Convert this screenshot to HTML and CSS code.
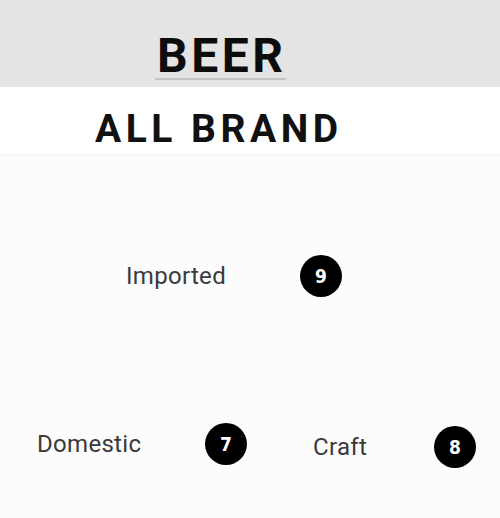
FILE: index.html
```html
<!DOCTYPE html>
<html>
<head>
<meta charset="utf-8">
<link rel="stylesheet" href="styles.css">
</head>
<body>
<header class="top">
  <span class="top-title">BEER</span>
</header>
<h1 class="brand">ALL BRAND</h1>
<main class="list">
  <div class="row row-imported">
    <div class="item item-imported">
      <span class="label">Imported</span>
      <span class="badge">9</span>
    </div>
  </div>
  <div class="row row-bottom">
    <div class="item item-domestic">
      <span class="label">Domestic</span>
      <span class="badge">7</span>
    </div>
    <div class="item item-craft">
      <span class="label">Craft</span>
      <span class="badge">8</span>
    </div>
  </div>
</main>
</body>
</html>
```
FILE: styles.css
```css
html, body {
  margin: 0;
  padding: 0;
}
body {
  width: 500px;
  height: 518px;
  overflow: hidden;
  background: #fcfcfc;
  font-family: Roboto, "Liberation Sans", sans-serif;
}
.top {
  height: 87px;
  box-sizing: border-box;
  padding: 34px 0 0 155px;
  background: #e4e4e4;
}
.top-title {
  display: inline-block;
  font-size: 48px;
  line-height: 44px;
  font-weight: 700;
  letter-spacing: 3.5px;
  color: #0c0c0c;
  padding: 0 0 0 2px;
  border-bottom: 2px solid #c4c4c4;
}
.brand {
  margin: 0;
  height: 68px;
  box-sizing: border-box;
  padding: 23px 0 0 95px;
  font-size: 39px;
  line-height: 39px;
  font-weight: 700;
  letter-spacing: 4.5px;
  color: #111;
  background: #fff;
  border-bottom: 1px solid #f3f3f3;
}
.list {
  display: flex;
  flex-direction: column;
}
.row {
  display: flex;
  align-items: flex-start;
}
.row-imported {
  padding: 100px 0 0 126px;
}
.row-bottom {
  padding: 126px 0 0 37px;
}
.item {
  display: flex;
  align-items: center;
}
.label {
  font-size: 24px;
  color: #3a3a3a;
  letter-spacing: 0.3px;
}
.item-imported .label { width: 174px; }
.item-domestic .label { width: 168px; }
.item-craft { margin: 3px 0 0 66px; }
.item-craft .label { width: 121px; }
.badge {
  width: 42px;
  height: 42px;
  border-radius: 50%;
  background: #000;
  color: #fff;
  display: flex;
  align-items: center;
  justify-content: center;
  font-family: "DejaVu Sans Condensed", "DejaVu Sans", sans-serif;
  font-size: 19px;
  font-weight: 700;
}
```
